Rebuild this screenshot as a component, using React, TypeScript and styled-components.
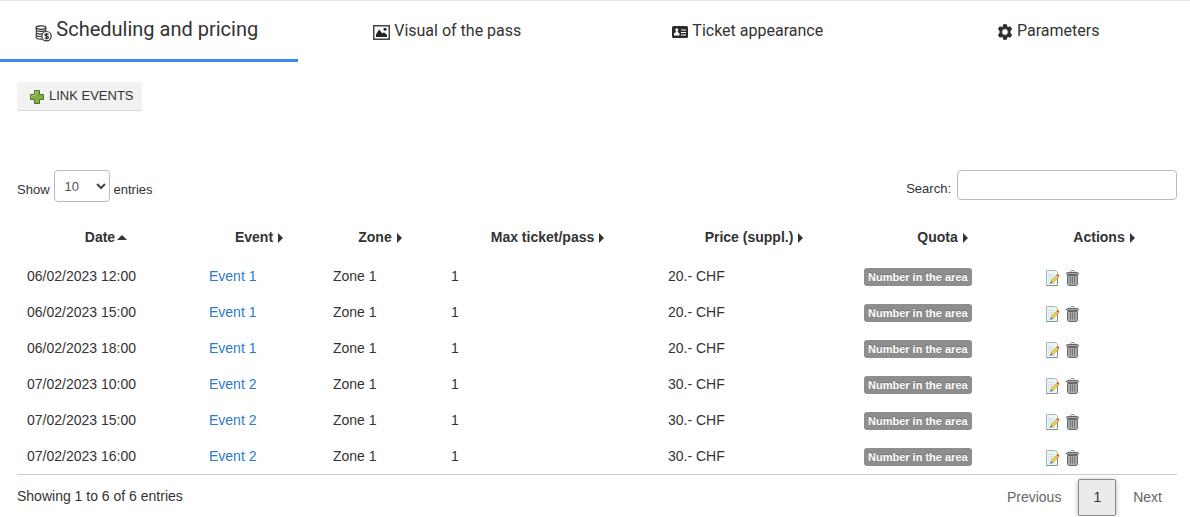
import React from "react";
import styled, { createGlobalStyle, css } from "styled-components";

const GlobalStyle = createGlobalStyle`
  *, *::before, *::after { box-sizing: border-box; }
  body {
    margin: 0;
    background: #fff;
    color: #333;
    font: 14px/20px "Liberation Sans", Arial, sans-serif;
  }
`;

const TabBar = styled.nav`
  display: grid;
  grid-template-columns: repeat(4, 25%);
  column-gap: 3px;
  overflow: hidden;
  border-top: 1px solid #e7e7e7;
`;

const Tab = styled.a<{ $active?: boolean }>`
  display: flex;
  align-items: center;
  justify-content: center;
  gap: 4px;
  height: 61px;
  padding: ${(p) => (p.$active ? "0 4px 2px 0" : "2px 4px 0 0")};
  border-bottom: 3px solid ${(p) => (p.$active ? "#3b8af2" : "transparent")};
  color: #333;
  font-family: Roboto, sans-serif;
  font-size: ${(p) => (p.$active ? 20 : 16)}px;
  line-height: 24px;
  text-decoration: none;
  white-space: nowrap;

  svg {
    flex: none;
    margin-top: ${(p) => (p.$active ? 8 : 2)}px;
  }
`;

const Content = styled.main`
  padding: 20px 13px 0 17px;
`;

const LinkButton = styled.button`
  display: flex;
  align-items: center;
  gap: 4px;
  height: 29px;
  padding: 0 8px 0 12px;
  border: 0;
  border-bottom: 1px solid #d8d8d8;
  border-radius: 2px;
  background: #f2f2f2;
  color: #333;
  font: 13px/20px "Liberation Sans", Arial, sans-serif;

  svg {
    margin-top: 2px;
  }
`;

const Controls = styled.div`
  display: flex;
  justify-content: space-between;
  align-items: flex-start;
  margin-top: 59px;
  font-size: 13px;
`;

const Control = styled.label`
  display: flex;
  align-items: center;
  gap: 4px;
`;

const ControlText = styled.span`
  padding-top: 8px;
`;

const field = css`
  border: 1px solid #bbb;
  border-radius: 4px;
  background-color: #fff;
  color: #555;
  font: 13px/20px "Liberation Sans", Arial, sans-serif;
`;

const SelectBox = styled.span`
  display: grid;
  align-items: center;

  > * {
    grid-area: 1 / 1;
  }

  svg {
    justify-self: end;
    margin-right: 3px;
    pointer-events: none;
  }
`;

const LengthSelect = styled.select`
  ${field}
  width: 56px;
  height: 32px;
  padding: 2px 10px 0;
  appearance: none;
`;

const SearchInput = styled.input`
  ${field}
  width: 220px;
  height: 30px;
  margin-left: 2px;
  padding: 4px 6px;
`;

const Table = styled.table`
  width: 100%;
  margin-top: 15px;
  table-layout: fixed;
  border-collapse: separate;
  border-spacing: 0;
  border-bottom: 1px solid #ccc;
`;

const HeadCell = styled.th`
  height: 41px;
  padding: 0 20px 2px 16px;
  font-weight: bold;
  text-align: center;
  white-space: nowrap;
`;

const SortArrow = styled.i<{ $up?: boolean }>`
  display: inline-block;
  margin-left: ${(p) => (p.$up ? 2 : 5)}px;
  border: 5px solid transparent;
  ${(p) =>
    p.$up
      ? css`
          border-top-width: 0;
          border-bottom-color: #333;
          vertical-align: 2px;
        `
      : css`
          border-right-width: 0;
          border-left-color: #333;
          vertical-align: -1px;
        `}
`;

const Cell = styled.td`
  height: 36px;
  padding: 0 10px;
  white-space: nowrap;
`;

const EventLink = styled.a`
  color: #2a7ac7;
  text-decoration: none;
`;

const Badge = styled.span`
  display: block;
  width: fit-content;
  height: 18px;
  margin-top: 1px;
  padding: 0 4px;
  border-radius: 3px;
  background: #8e8e8e;
  color: #fff;
  font-size: 11px;
  font-weight: bold;
  line-height: 19px;
  text-shadow: 0 -1px 0 rgba(0, 0, 0, 0.25);
`;

const Actions = styled.div`
  display: flex;
  gap: 5px;
  padding-top: 4px;
`;

const IconButton = styled.button`
  display: block;
  padding: 0;
  border: 0;
  background: none;

  svg {
    display: block;
  }
`;

const Footer = styled.div`
  display: flex;
  justify-content: space-between;
  align-items: flex-start;
  padding-top: 4px;
`;

const Info = styled.div`
  padding-top: 7px;
`;

const Pager = styled.nav`
  display: flex;
  gap: 2px;
`;

const PageButton = styled.button<{ $current?: boolean }>`
  height: 37px;
  padding: 0 14px 2px;
  border: 1px solid ${(p) => (p.$current ? "#8a8a8a" : "transparent")};
  border-radius: 2px;
  background: ${(p) => (p.$current ? "#ebebeb" : "none")};
  box-shadow: ${(p) => (p.$current ? "0 1px 5px rgba(0, 0, 0, 0.3)" : "none")};
  color: ${(p) => (p.$current ? "#333" : "#666")};
  font: 14px/20px "Liberation Sans", Arial, sans-serif;
`;

const CoinsIcon = () => (
  <svg width="17" height="17" viewBox="0 0 17 17" fill="none" stroke="#333" strokeWidth="1.2">
    <ellipse cx="6" cy="2.6" rx="4.8" ry="1.700" />
    <path d="M1.200 2.600v2.200c0 2 7.500 2.200 9.600.4V2.600M1.800 6c-.9.4-.9 2 .2 2.400 1.500.7 4 .7 5.600.3M10.500 5.500v1M1.800 8.500c-1 .5-.9 2 .2 2.500 1.200.6 3 .6 4.600.4M1.300 11.200c-.7 2 .5 3 5.700 2.900" />
    <circle cx="11.500" cy="11.200" r="4.700" fill="#fff" />
    <path d="M13.500 9.500c-.5-1-3.700-1-3.700.3 0 1.600 3.700.9 3.700 2.600 0 1.300-3.300 1.300-3.800.1M11.500 7.900v6.600" />
  </svg>
);

const PictureIcon = () => (
  <svg width="17" height="15" viewBox="0 0 17 15">
    <path fill="#444" fillRule="evenodd" d="M0 0h17v15H0zM1.500 1.500v12h14v-12z" />
    <path fill="#222" d="M3 12V9.500l3-5 3.500 4 1.300-1.200L14 9.800V12z" />
    <circle cx="12" cy="4.300" r="1.500" fill="#222" />
  </svg>
);

const CardIcon = () => (
  <svg width="16" height="12" viewBox="0 0 16 12">
    <rect width="16" height="12" rx="1.500" fill="#2b2b2b" />
    <circle cx="4.800" cy="3.700" r="1.500" fill="#fff" />
    <path fill="#fff" d="M4 4h1.600v2l1.900 1.500V9.500H2V7.500L4 6zM9 3.500h5v1H9zM9 6h5v1H9zM9 8.500h5v1H9z" />
  </svg>
);

const GearIcon = () => (
  <svg width="16" height="16" viewBox="0 0 16 16">
    <path
      fill="#2b2b2b"
      fillRule="evenodd"
      stroke="#2b2b2b"
      strokeLinejoin="round"
      d="M6.600.7h2.800l.5 2.100 1.200.7 2.100-.7 1.400 2.400-1.600 1.500v2.600l1.600 1.500-1.400 2.400-2.100-.7-1.200.7-.5 2.100H6.600l-.5-2.100-1.200-.7-2.100.7-1.400-2.400L3 9.300V6.700L1.400 5.200l1.400-2.400 2.100.7 1.200-.7zM8 4.600a3.400 3.400 0 1 0 0 6.800 3.400 3.400 0 0 0 0-6.800z"
    />
  </svg>
);

const PlusIcon = () => (
  <svg width="16" height="16" viewBox="0 0 16 16">
    <path fill="#86ac42" stroke="#487620" d="M5.500 1.500h5v4h4v5h-4v4h-5v-4h-4v-5h4z" />
    <path fill="none" stroke="#a9c972" d="M2.500 9V6.500h4v-4h3" />
  </svg>
);

const ChevronIcon = () => (
  <svg width="12" height="8" viewBox="0 0 12 8">
    <path d="M2 2l4 4 4-4" fill="none" stroke="#444" strokeWidth="2" />
  </svg>
);

const EditIcon = () => (
  <svg width="16" height="16" viewBox="0 0 16 16">
    <path fill="#eef5f6" stroke="#a3b6b8" d="M1.500.5h9l2 2v13h-11z" />
    <path fill="none" stroke="#7f9497" d="M12.500 5v10.500h-11" />
    <path stroke="#d3dfe1" d="M3 4.500h6M3 6.500h5M3 8.500h4M3 10.500h2M3 13.500h7" />
    <path d="M5.800 12.800l1-3 5-5 2 2-5 5z" fill="#f1d04b" stroke="#a98a36" strokeWidth=".6" />
    <path d="M11.500 5.100l1.300-1.200 1.900 1.900-1.200 1.300z" fill="#df5448" />
    <path d="M5.200 13.400l.8-2 1.300 1.200z" fill="#222" />
  </svg>
);

const TrashIcon = () => (
  <svg width="14" height="16" viewBox="0 0 14 16">
    <path fill="none" stroke="#777" d="M4.500 2.500v-1l1-1h2l1 1v1" />
    <rect x=".5" y="2.500" width="12" height="2" rx="1" fill="#aaa" stroke="#666" />
    <path fill="#a8a8a8" stroke="#6c6c6c" d="M1.500 5.500h10v9l-1 1h-8l-1-1z" />
    <path stroke="#777" d="M4.500 6.500v7M6.500 6.500v7M8.500 6.500v7" />
  </svg>
);

const tabs = [
  { label: "Scheduling and pricing", Icon: CoinsIcon },
  { label: "Visual of the pass", Icon: PictureIcon },
  { label: "Ticket appearance", Icon: CardIcon },
  { label: "Parameters", Icon: GearIcon },
];

const columns = [
  { label: "Date", width: 182 },
  { label: "Event", width: 124 },
  { label: "Zone", width: 118 },
  { label: "Max ticket/pass", width: 217 },
  { label: "Price (suppl.)", width: 196 },
  { label: "Quota", width: 181 },
  { label: "Actions", width: 142 },
];

const rows = [
  { date: "06/02/2023 12:00", event: "Event 1", price: "20.- CHF" },
  { date: "06/02/2023 15:00", event: "Event 1", price: "20.- CHF" },
  { date: "06/02/2023 18:00", event: "Event 1", price: "20.- CHF" },
  { date: "07/02/2023 10:00", event: "Event 2", price: "30.- CHF" },
  { date: "07/02/2023 15:00", event: "Event 2", price: "30.- CHF" },
  { date: "07/02/2023 16:00", event: "Event 2", price: "30.- CHF" },
];

export default function App() {
  return (
    <>
      <GlobalStyle />
      <TabBar>
        {tabs.map(({ label, Icon }, i) => (
          <Tab key={label} href="#" $active={i === 0}>
            <Icon />
            {label}
          </Tab>
        ))}
      </TabBar>
      <Content>
        <LinkButton type="button">
          <PlusIcon />
          LINK EVENTS
        </LinkButton>
        <Controls>
          <Control>
            <ControlText>Show</ControlText>
            <SelectBox>
              <LengthSelect defaultValue="10">
                <option>10</option>
                <option>25</option>
                <option>50</option>
                <option>100</option>
              </LengthSelect>
              <ChevronIcon />
            </SelectBox>
            <ControlText>entries</ControlText>
          </Control>
          <Control>
            <ControlText>Search:</ControlText>
            <SearchInput type="search" />
          </Control>
        </Controls>
        <Table>
          <colgroup>
            {columns.map((c) => (
              <col key={c.label} width={c.width} />
            ))}
          </colgroup>
          <thead>
            <tr>
              {columns.map((c, i) => (
                <HeadCell key={c.label} scope="col">
                  {c.label}
                  <SortArrow $up={i === 0} />
                </HeadCell>
              ))}
            </tr>
          </thead>
          <tbody>
            {rows.map((r) => (
              <tr key={r.date}>
                <Cell>{r.date}</Cell>
                <Cell>
                  <EventLink href="#">{r.event}</EventLink>
                </Cell>
                <Cell>Zone 1</Cell>
                <Cell>1</Cell>
                <Cell>{r.price}</Cell>
                <Cell>
                  <Badge>Number in the area</Badge>
                </Cell>
                <Cell>
                  <Actions>
                    <IconButton type="button" aria-label="Edit">
                      <EditIcon />
                    </IconButton>
                    <IconButton type="button" aria-label="Delete">
                      <TrashIcon />
                    </IconButton>
                  </Actions>
                </Cell>
              </tr>
            ))}
          </tbody>
        </Table>
        <Footer>
          <Info>Showing 1 to 6 of 6 entries</Info>
          <Pager aria-label="Pages">
            <PageButton type="button">Previous</PageButton>
            <PageButton type="button" $current>
              1
            </PageButton>
            <PageButton type="button">Next</PageButton>
          </Pager>
        </Footer>
      </Content>
    </>
  );
}
